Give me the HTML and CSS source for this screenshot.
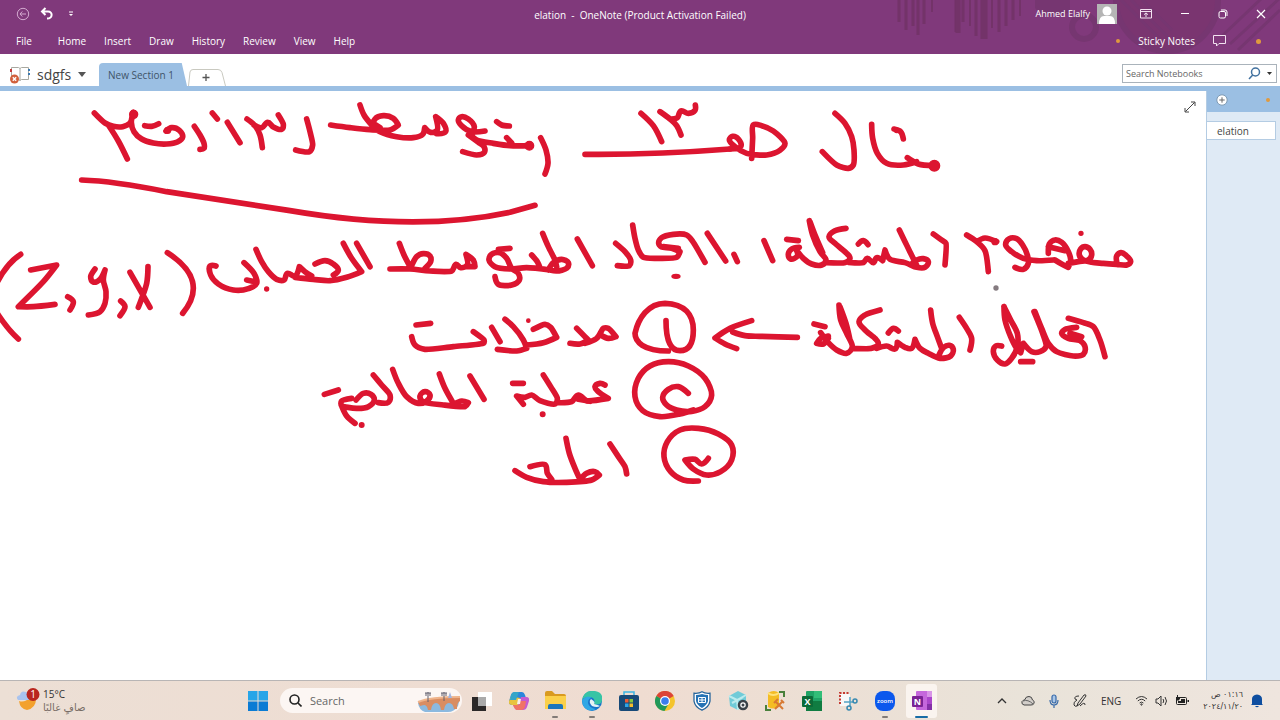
FILE: index.html
```html
<!DOCTYPE html>
<html lang="en">
<head>
<meta charset="utf-8">
<title>elation - OneNote</title>
<link rel="stylesheet" href="styles.css">
</head>
<body>
<div class="app">
  <header class="ribbon">
    <svg class="ribbon-art" width="400" height="54" viewBox="0 0 400 54" aria-hidden="true">
      <g stroke="#733369" stroke-width="3">
        <path d="M19 0v22M26 0v30M33 0v26M38 0v35M44 0v24M76 0v32M83 0v22M96 0v36M119 0v32M126 0v26M133 0v20"/>
        <path d="M52 0v12M90 0v26M112 0v28M140 0v16" stroke-width="2"/>
        <path d="M104 0v39" stroke-width="7"/><path d="M78 0v33" stroke-width="5"/>
      </g>
      <g fill="none" stroke="#763671">
        <circle cx="204" cy="27" r="12" stroke-width="6"/>
        <circle cx="287" cy="0" r="51" fill="#7a3570" stroke-width="6"/>
        <path d="M155 0h35v12q-26 10-35-4z" fill="#763671" stroke="none"/>
        <path d="M241 0l39 39M251 0l36 36M262 0l30 30M350 44l50-46M342 36l40-38M358 50l42-40" stroke-width="3"/>
      </g>
    </svg>
    <div class="title-row">
      <div class="quick">
        <button class="icon-btn" aria-label="Back"><svg width="14" height="14" viewBox="0 0 14 14" fill="none" stroke="#d3a9cf"><circle cx="7" cy="7" r="5.700"/><path d="M10 7H4M6.300 4.500L4 7l2.300 2.500"/></svg></button>
        <button class="icon-btn" aria-label="Undo"><svg width="14" height="14" viewBox="0 0 14 14" fill="none" stroke="#fff" stroke-width="2"><path d="M5.500 1L2 4.500 5.500 8M2 4.500h6c5 0 5 7-1 7"/></svg></button>
        <button class="icon-btn" aria-label="Customize toolbar"><svg width="6" height="6" viewBox="0 0 6 6"><path d="M1 1h4" stroke="#fff"/><path d="M1 3h4L3 5z" fill="#fff"/></svg></button>
      </div>
      <div class="title">elation&nbsp; -&nbsp; OneNote (Product Activation Failed)</div>
      <div class="window-tools">
        <span class="user">Ahmed Elalfy</span>
        <svg class="avatar" width="20" height="20" viewBox="0 0 20 20"><path fill="#b5b5b5" d="M0 0h20v20H0z"/><circle cx="10" cy="7" r="4.500" fill="#fff"/><path d="M2 20q0-8 5-8h6q5 0 5 8z" fill="#fff"/></svg>
        <button class="icon-btn" aria-label="Ribbon options"><svg width="12" height="10" viewBox="0 0 12 10" fill="none" stroke="#f2e2f0"><path d="M.5.500h11v8.500H.5zM.5 2.500h11M6 8V4M4 5.700L6 3.900l2 1.800"/></svg></button>
        <button class="icon-btn" aria-label="Minimize"><svg width="10" height="10" viewBox="0 0 10 10"><path d="M1 4.500h8" stroke="#fff"/></svg></button>
        <button class="icon-btn" aria-label="Restore"><svg width="10" height="10" viewBox="0 0 10 10" fill="none" stroke="#fff"><rect x="1" y="2.500" width="6.500" height="6.500" rx="1.500"/><path d="M3 1h4q2 0 2 2v4"/></svg></button>
        <button class="icon-btn" aria-label="Close"><svg width="10" height="10" viewBox="0 0 10 10"><path d="M1 1l8 8M9 1L1 9" stroke="#fff" stroke-width="1.200"/></svg></button>
      </div>
    </div>
    <nav class="menu">
      <button class="file">File</button><button>Home</button><button>Insert</button><button>Draw</button><button>History</button><button>Review</button><button>View</button><button>Help</button>
      <div class="menu-right">
        <i class="dot"></i><button>Sticky Notes</button>
        <button aria-label="Comments"><svg width="13" height="12" viewBox="0 0 13 12" fill="none" stroke="#f2e2f0"><path d="M.5.500h12v8H6L3.500 11V8.500h-3z"/></svg></button>
        <i class="dot big"></i>
      </div>
    </nav>
  </header>

  <div class="notebook-bar">
    <button class="notebook">
      <svg width="20" height="19" viewBox="0 0 20 19" fill="none"><path d="M1.500 2.500h7l1.500 1 1.500-1h7v12h-7l-1.500 1-1.500-1h-7zM10 3.500v12" stroke="#a8a8a0"/><path d="M1 4v3" stroke="#c43b3b" stroke-width="2"/><path d="M19 4v2M19 8v2" stroke="#3d7ab0" stroke-width="2"/><circle cx="4.500" cy="14" r="4.500" fill="#d1603c"/><path d="M2.800 12.300l3.400 3.400M6.200 12.300l-3.400 3.400" stroke="#fff" stroke-width="1.400"/></svg>
      <span>sdgfs</span>
      <svg width="8" height="5" viewBox="0 0 8 5"><path d="M0 0h8L4 5z" fill="#555"/></svg>
    </button>
    <button class="section-tab">New Section 1</button>
    <button class="add-tab" aria-label="Add section"><svg width="38" height="17" viewBox="0 0 38 17" fill="none"><path d="M.5 17L2 3Q2.500.500 5 .500h25q3 0 4 3L37.500 17" stroke="#c9c9c0"/><path d="M18 5v7M14.500 8.500h7" stroke="#555" stroke-width="1.300"/></svg></button>
    <form class="search">
      <input type="text" placeholder="Search Notebooks" aria-label="Search Notebooks">
      <svg width="13" height="13" viewBox="0 0 13 13" fill="none" stroke="#41719f" stroke-width="1.500"><circle cx="7.500" cy="5" r="4"/><path d="M4.700 8L1 12"/></svg>
      <svg width="5" height="3" viewBox="0 0 5 3"><path d="M0 0h5L2.500 3z" fill="#333"/></svg>
    </form>
  </div>

  <main class="workspace">
    <section class="page">
      <svg class="ink" width="1206" height="589" viewBox="0 0 1206 589" role="img" aria-label="Handwritten notes">
        <g transform="translate(0 4) scale(.33333)">
          <path d="M283 54L315 84 340 94 368 95 390 84 400 52M325 90L355 138 382 192M400 52L394 82 402 110 425 132 460 144 500 147 532 141 548 126 538 106 515 98 498 108M434 92L455 94 476 86M583 94L600 120 612 145 612 160 600 163M637 54L652 72M682 82L720 143M741 72L765 92 780 120 787 158M762 90L785 98 803 82 820 96 845 103 850 88 835 60"/>
          <path d="M245 255Q340 258 500 290L870 347Q1250 412 1530 352L1605 331"/>
          <circle cx="401" cy="58" r="12"/><circle cx="503" cy="106" r="9"/>
        </g>
        <g transform="translate(290 4) scale(.33333)">
          <path d="M50 72L60 110 68 150 58 170 17 165M122 90L180 98 240 104 300 105 325 90 310 70 280 62 255 72 250 95 270 110 320 125 370 128 398 118 404 98 422 112 442 105 437 65 460 85 467 110 440 116M210 30L222 60 245 90M250 85L270 98"/>
          <path d="M585 108L545 110 515 92 505 75 515 65 535 72 553 95 545 120 560 135 610 145 660 152 718 152M650 128L665 144M535 120L565 142 582 155 583 172 560 180 518 170M620 80L635 90 658 93M752 128L768 165 774 205 765 237"/>
          <circle cx="718" cy="152" r="13"/>
        </g>
        <g transform="translate(570 4) scale(.33333)">
          <path d="M45 178Q250 180 480 162"/>
          <path d="M480 162L512 155 505 132 488 124 478 135 495 155 530 175 590 180 630 166 645 145 610 108 575 92 550 90 548 130 545 190M213 55L250 92 275 140M270 50L300 72 320 92 333 120M303 72L322 68 333 48 355 55 375 46 376 30M795 55L825 85 845 125 852 165 850 210 835 220 800 210 757 170M905 88L908 130 922 175 950 205 1000 210 1040 200M1012 188L1045 207 1090 212M972 102L992 110 1000 132"/>
          <circle cx="1093" cy="212" r="16"/><circle cx="980" cy="106" r="7"/>
        </g>
        <g transform="translate(0 129) scale(.33333)">
          <path d="M62 103Q20 130-10 190M-5 285Q25 330 55 357M502 98Q630 180 548 280"/>
          <path d="M92 150L170 135 130 185 55 260 100 260 165 253M203 230L220 245 210 270M285 147L272 170 280 186 300 178 315 150M315 150L310 180 318 215 315 250 300 275 265 285M362 243L375 260 360 287M390 157L450 262M444 140L440 190 415 262"/>
          <path d="M648 138L630 138 632 165 655 192 700 210 745 206 770 190 762 160 732 128M765 185L740 180M768 88L785 125 805 155 830 178 852 180 862 160 885 168 898 140 915 155 935 168M885 172L940 178 990 182 1040 172 1085 155 1055 115 1030 70M945 132L975 122 1000 132 1015 150 1000 165M1070 70L1110 140"/>
          <circle cx="800" cy="207" r="6"/>
        </g>
        <g transform="translate(380 114) scale(.33333)">
          <path d="M30 192L90 192 150 198 215 198 228 178 242 188 262 180 258 148 280 165 285 185 262 185M58 115L72 150 92 188 110 155 130 146 150 153 152 170 135 190M355 133L390 130M510 195L440 188 390 192 345 185 327 165 335 148 360 143 380 160 395 190 415 205 418 225 395 240 355 238 345 215M455 150L472 170 480 188M488 85L505 125 525 165 530 185M505 195L520 173 545 163 565 173 560 190 530 198 510 195M592 102L637 182M707 115L735 140 752 165 748 182 712 182"/>
          <path d="M758 60L765 100 775 135 790 157 840 160 890 157 900 140 875 130 845 126 836 115 845 98 880 88 920 90 940 112 975 172M850 125L895 130M982 85L1037 168M1062 148L1072 170"/>
          <ellipse cx="888" cy="214" rx="12" ry="6"/>
        </g>
        <g transform="translate(740 119) scale(.33333)">
          <path d="M72 92L98 152M140 88L175 92M178 112L155 117 145 132 152 147 172 138 168 118 190 145 215 162 245 165 258 150 240 125 218 75 208 32M210 35L227 80 248 128M318 55L285 62 267 80 285 100 320 130 330 145 315 158 260 158M325 157L370 158 382 145 400 158 410 143 428 152 435 120 450 148 495 158 530 172 555 172 565 155 550 146 530 150 512 165M478 60L495 95 512 130 530 166M355 102L370 92 384 104M580 72L605 90 618 100 615 165"/>
          <path d="M680 75L710 95 735 122 745 185M710 95L735 84 770 95M940 150L890 152 850 145 815 125 797 105 808 86 830 86 848 105 862 135 865 160 850 178 825 172M925 110L975 122M925 130L928 102 945 90 965 97 985 125 992 150 985 172 965 162 945 150M985 160L1015 155 1045 150 1055 135 1050 118 1035 110 1022 117 1018 135 1030 150 1055 157 1090 160 1130 163 1160 165 1172 155 1158 136 1143 128 1130 138 1130 155"/>
          <circle cx="765" cy="95" r="9"/><circle cx="1023" cy="70" r="6"/>
          <circle class="pointer" cx="768" cy="234" r="8"/>
          <path d="M222 342L255 350M265 378L242 385 230 400 250 402 265 385M242 368L265 398 290 420 320 430 337 410 320 370 302 330 297 285M300 290L318 340 330 390M420 300L375 315 357 335 375 360 405 385 415 402 395 415 340 415M410 415L440 408 465 417 472 397 495 412 515 415 525 388 540 415 565 430 600 445 632 438 640 418 628 406 610 413 597 435M572 300L578 340 592 380 606 418M445 369L460 355 475 363M658 322L680 355 695 385 690 420"/>
          <path d="M792 290L812 330 832 370 832 410 815 445 795 462 772 450 760 425 767 408 785 408M792 290L795 330 812 380 828 412 842 428 850 400 875 425 900 425 918 410 908 370 882 305M885 305L905 355 925 400 950 425 1000 438 1030 433 1035 410 1020 392 985 385 965 370 975 358 1010 352M985 325L1030 338 1060 350 1080 390 1095 440M990 370L1025 380M842 455L878 455"/>
          <path d="M35 332L-30 355 -75 384 -45 402 -10 416M-22 366L15 377 60 379 172 382"/>
        </g>
        <g transform="translate(310 199) scale(.33333)">
          <path d="M318 105L362 100M305 140L315 165 345 178 430 170 520 160 522 150 490 125M545 112L570 155M585 88L610 110 640 150 650 175 620 183 562 178M650 165L700 158 740 142 722 112 705 103 670 118M800 115L825 140 835 150 810 162 780 160M825 160L860 145 880 115 895 115 918 140 895 145 872 135"/>
          <path d="M1075 183C1000 183 975 155 975 130 985 85 1015 40 1065 40 1125 42 1150 75 1150 120 1150 165 1135 182 1110 182 1080 182 1068 150 1068 92"/>
          <path d="M1135 310L1105 290 1075 298 1058 322 1070 345 1100 360 1145 364 1185 350 1205 315 1185 265 1135 228 1075 215 1020 228 985 265 975 320 998 362 1050 380 1110 372 1150 360M1165 573L1120 570 1082 545 1062 500 1072 455 1110 420 1165 415 1225 432 1265 465 1265 510 1232 545 1190 555 1150 537 1125 510 1155 508 1175 522 1195 505"/>
          <path d="M43 313L85 300M138 330L160 310 183 313 193 330 175 350 140 355 95 347 95 333 125 325M95 348L110 378 135 400M190 255L215 285 240 315 235 337 205 338M248 238L265 280 290 320 325 340 350 333 360 315 345 305 330 318 340 336 400 345 465 350 475 338 455 333 425 345M388 252L405 295 430 340M480 258L522 328M608 280L640 280M640 343L620 318 645 322 665 315 690 332 735 342 742 325 722 290 700 255M740 338L785 335 805 315 830 332 895 325 865 305 855 290 870 280 885 285"/>
          <path d="M615 542L650 562 700 575 770 577 845 570 868 555 855 545 830 550 808 572M768 445L778 490 795 535 810 568M660 530L705 524 712 550 725 568M900 462L925 500 945 530 950 552"/>
          <path d="M805 328L840 334"/>
          <circle cx="655" cy="92" r="5"/><circle cx="155" cy="405" r="7"/><circle cx="698" cy="373" r="7"/>
        </g>
      </svg>
      <button class="expand" aria-label="Full page view"><svg width="12" height="12" viewBox="0 0 12 12" fill="none" stroke="#444"><path d="M1.500 10.500l9-9M7 1h4v4M1 7v4h4"/></svg></button>
    </section>
    <aside class="pages">
      <div class="pages-head">
        <button class="icon-btn" aria-label="Add page"><svg width="12" height="12" viewBox="0 0 12 12"><circle cx="6" cy="6" r="5.200" fill="#fff" stroke="#7e9ab3"/><path d="M6 3.300v5.400M3.300 6h5.400" stroke="#666"/></svg></button>
        <i class="dot"></i>
      </div>
      <button class="page-item">elation</button>
    </aside>
  </main>

  <footer class="taskbar">
    <button class="weather">
      <svg width="24" height="26" viewBox="0 0 24 26"><path d="M3 13q6 2 11-4l6 2q0 9-9 11-7-1-8-9z" fill="#f3a12d"/><path d="M2 12q-3-4 2-5 1-5 6-3 4 1 3 8z" fill="#a9c3ee"/><circle cx="17" cy="6.500" r="6.500" fill="#b9261e"/><text x="17" y="10" text-anchor="middle" class="badge">1</text></svg>
      <span class="weather-text"><span>15°C</span><span class="sky" lang="ar" dir="rtl">صافٍ غالبًا</span></span>
    </button>
    <div class="dock">
      <button class="start" aria-label="Start"><svg width="20" height="20" viewBox="0 0 20 20"><path d="M0 0h9.500v9.500H0zM10.500 0H20v9.500h-9.500z" fill="#27a5e8"/><path d="M0 10.500h9.500V20H0zM10.500 10.500H20V20h-9.500z" fill="#0a7bd4"/></svg></button>
      <div class="task-search">
        <svg width="13" height="13" viewBox="0 0 13 13" fill="none" stroke="#222" stroke-width="1.600"><circle cx="5.500" cy="5.500" r="4.500"/><path d="M9 9l3.500 3.500"/></svg>
        <input type="text" placeholder="Search" aria-label="Search">
        <svg width="44" height="22" viewBox="0 0 44 22"><path d="M1 13q12-6 42-5l-2 8q-4 6-10 6H8Q2 20 1 13z" fill="#8bb9df"/><path d="M1 12q12-5 42-5v4q-3 1-3 8h-3q-1-6-5-6t-5 7h-3q-1-7-5-7t-5 7h-3q-1-5-4-5l-4 1z" fill="#d98d62"/><path d="M1 12q12-5 42-5" stroke="#efb48b" stroke-width="2" fill="none"/><path d="M11 12V2M27 11V2M8 3h6M24 3h6M9 3v3M13 3v3M25 3v3M29 3v3" stroke="#62616f"/><path d="M31 8l2-6 2 6z" fill="#a4b6df"/></svg>
      </div>
      <div class="apps">
        <button aria-label="Task view"><svg width="20" height="20" viewBox="0 0 20 20"><path d="M6 1h14v14H6z" fill="#fff"/><path d="M0 6h14v14H0z" fill="#2b2828"/><path d="M6 6h8v9H6z" fill="#aaa"/></svg></button>
        <button aria-label="Copilot"><svg width="20" height="20" viewBox="0 0 20 20"><path d="M6 1h7q2 0 3 3l1 3h-5l-3 7H3q-4 0-3-4l2-6q1-3 4-3z" fill="#2b86dc"/><path d="M0 10l2-4q5 0 9 1l-2 7H3q-4 0-3-4z" fill="#e8c33f"/><path d="M6 1h4L7 9H1l1-5q1-3 4-3z" fill="#33a5c8"/><path d="M12 6h5q4 0 3 4l-2 6q-1 3-4 3H8q-2 0-3-3l-1-2h5z" fill="#c55bd0"/><path d="M4 14h6l1-4h6l-1 6q-1 3-4 3H8q-2 0-4-5z" fill="#f07366"/><path d="M9 8h3l-1 5H8z" fill="#f7eee9"/></svg></button>
        <button class="running" aria-label="File Explorer"><svg width="21" height="20" viewBox="0 0 21 20"><path d="M0 2q0-2 2-2h5l3 3h9q2 0 2 2v5H0z" fill="#d99a20"/><path d="M0 5h21v13H0z" fill="#fbd04a"/><path d="M3 18v-3q0-2 2-2h11q2 0 2 2v3z" fill="#1c75bc"/></svg></button>
        <button class="running" aria-label="Edge"><svg width="20" height="20" viewBox="0 0 20 20"><circle cx="10" cy="10" r="10" fill="#1874ca"/><path d="M0 9Q2-1 12 0t8 10q-2 5-8 3 2-6-4-7-6 0-8 3z" fill="#37c4a5"/><path d="M0 9q5-6 10-2-4 0-4 5 1 5 8 6-7 4-12-2Q0 13 0 9z" fill="#2fa7e5"/><path d="M9 8q-3 3 1 7 5 2 8 0-2-1-6-2 2-2-3-5z" fill="#e6f3f4"/></svg></button>
        <button aria-label="Microsoft Store"><svg width="20" height="20" viewBox="0 0 20 20"><path d="M5 6V1h10v5" fill="none" stroke="#3bb4e4" stroke-width="1.500"/><rect y="4" width="20" height="16" rx="2" fill="#174978"/><path d="M6 8h3.500v3.500H6z" fill="#ef5a33"/><path d="M10.500 8H14v3.500h-3.500z" fill="#86c63e"/><path d="M6 12.500h3.500V16H6z" fill="#2da5e8"/><path d="M10.500 12.500H14V16h-3.500z" fill="#f6bd2d"/></svg></button>
        <button aria-label="Chrome"><svg width="20" height="20" viewBox="0 0 20 20"><circle cx="10" cy="10" r="10" fill="#f5c42c"/><path d="M10 10L1.300 5A10 10 0 0 1 18.700 5z" fill="#dc4437"/><path d="M10 10L1.300 5A10 10 0 0 0 9.500 20L14 12z" fill="#21985a"/><circle cx="10" cy="10" r="5" fill="#fff"/><circle cx="10" cy="10" r="3.800" fill="#3b7ded"/></svg></button>
        <button aria-label="Security"><svg width="18" height="20" viewBox="0 0 18 20"><path d="M9 .700q3 2 8 1.500v8q-1 6-8 9-7-3-8-9v-8Q6 2.700 9 .700z" fill="#fff" stroke="#27659b" stroke-width="1.300"/><path d="M9 3q3 1 6 1v6q-1 4-6 7-5-3-6-7V4q3 0 6-1z" fill="#2673b5"/><path d="M5.500 6.500h7v5h-7zM5.500 9h7M9 6.500v5" fill="none" stroke="#fff"/></svg></button>
        <button aria-label="Database tool"><svg width="21" height="20" viewBox="0 0 21 20"><path d="M1 5l9-5 8 4v9l-8 6-8-4z" fill="#70cbd8"/><path d="M1 5l8 4 9-5M9 9l1 10M4 12l11-6" fill="none" stroke="#bcebed" stroke-width="2"/><circle cx="15" cy="14" r="4" fill="#fff" stroke="#3a4249" stroke-width="2.500"/><circle cx="15" cy="14" r="1.500" fill="#3a4249"/></svg></button>
        <button aria-label="Configuration"><svg width="20" height="20" viewBox="0 0 20 20"><path d="M3 2q6-4 11 0v14q-6 3-11 0z" fill="#f4bc24"/><path d="M3 2q5 4 11 0" fill="none" stroke="#ffe27a" stroke-width="2"/><path d="M14 1h5v5M1 14v5h5" fill="none" stroke="#49803b" stroke-width="2"/><path d="M10 10l8 8M18 10l-8 8M9 12l4-4M16 9l3 3" stroke="#d87932" stroke-width="2"/></svg></button>
        <button aria-label="Excel"><svg width="20" height="20" viewBox="0 0 20 20"><rect x="4" width="16" height="20" rx="1" fill="#20a366"/><path d="M12 0h8v7h-8z" fill="#32bd78"/><path d="M4 10h16v10H4z" fill="#107c41"/><rect y="5" width="11" height="11" rx="1" fill="#0c6a38"/><text x="5.500" y="14" text-anchor="middle" class="logo-letter">X</text></svg></button>
        <button aria-label="Snipping Tool"><svg width="20" height="20" viewBox="0 0 20 20" fill="none"><path d="M2 3h10v12H2z" fill="#f8f8f8"/><path d="M2 13V2h9" stroke="#c63a32" stroke-width="2" stroke-dasharray="2 1.500"/><path d="M6 11h10M12 6v10" stroke="#54a2c4" stroke-width="1.500"/><circle cx="17" cy="10" r="2" stroke="#3789b1" stroke-width="1.500"/><circle cx="11" cy="17" r="2" stroke="#3789b1" stroke-width="1.500"/></svg></button>
        <button class="running" aria-label="Zoom"><svg width="20" height="20" viewBox="0 0 20 20"><rect width="20" height="20" rx="8" fill="#0b58ed"/><text x="10" y="12" text-anchor="middle" class="zoom-word">zoom</text></svg></button>
        <button class="running active" aria-label="OneNote"><svg width="20" height="20" viewBox="0 0 20 20"><rect x="4" width="16" height="19" rx="1" fill="#c567dc"/><path d="M15 0h5v6h-5z" fill="#d894e7"/><path d="M15 6h5v7h-5z" fill="#ab46cb"/><path d="M15 13h5v6h-5z" fill="#8430a7"/><rect y="5" width="11" height="11" rx="1" fill="#7b2294"/><text x="5.500" y="14" text-anchor="middle" class="logo-letter">N</text></svg></button>
      </div>
    </div>
    <div class="tray">
      <button aria-label="Hidden icons"><svg width="10" height="6" viewBox="0 0 10 6" fill="none" stroke="#333" stroke-width="1.300"><path d="M1 5l4-4 4 4"/></svg></button>
      <button aria-label="OneDrive"><svg width="14" height="11" viewBox="0 0 14 11"><path d="M3 10Q0 9 1 6.500 2 5 3.500 5 5 1 8 1.500q3 0 3.500 3.500Q14 6 13 8.500q-1 1.500-3 1.500z" fill="#d2cec9" stroke="#444"/><path d="M2 6q5-2 10 3" fill="none" stroke="#666"/></svg></button>
      <button aria-label="Microphone"><svg width="10" height="14" viewBox="0 0 10 14" fill="none" stroke="#3568a8" stroke-width="1.200"><rect x="3" y="1" width="4" height="8" rx="2" fill="#a9c6e7"/><path d="M1 6q0 5 4 5t4-5M5 11v3"/></svg></button>
      <button aria-label="Pen"><svg width="14" height="14" viewBox="0 0 14 14" fill="none" stroke="#333"><path d="M4 12l1-3 6-8q2-1 2 1L7 10zM6 2Q1 2 2 5l2 1Q0 8 1 11q1 2 3 1M7 12q5-5 5-1"/></svg></button>
      <button class="lang">ENG</button>
      <button class="status" aria-label="Network, volume and battery">
        <svg width="13" height="11" viewBox="0 0 13 11" fill="none" stroke="#333"><path d="M1 4q5.500-5 11 0M2.800 6q3.700-3.500 7.400 0M4.600 8q1.900-1.800 3.800 0"/><circle cx="6.500" cy="9.500" r=".7"/></svg>
        <svg width="13" height="12" viewBox="0 0 13 12" fill="none" stroke="#333"><path d="M1 4h2l3-3v10L3 8H1zM8 4q1.500 2 0 4M10 2q3 4 0 8"/></svg>
        <svg width="14" height="11" viewBox="0 0 14 11"><rect x="1.500" y="2.500" width="10" height="7" rx="1" fill="none" stroke="#222"/><path d="M6 4h4v4H3V6h3zM12.500 5H14v2h-1.500zM2 0h1v2h2v2L3 6 1 4V2h1z" fill="#222"/></svg>
      </button>
      <button class="clock" lang="ar" dir="rtl"><span>٠١:١٦ ص</span><span>٢٠٢٤/١١/٢٠</span></button>
      <button aria-label="Notifications"><svg width="12" height="14" viewBox="0 0 12 14"><path d="M1 10V5q0-4 5-4.500Q11 1 11 5v5l1 1H0zM4 12h4q-2 2.500-4 0z" fill="#0f4ea0"/></svg></button>
    </div>
  </footer>
</div>
<script src="ink.js"></script>
</body>
</html>
```
FILE: styles.css
```css
* { box-sizing: border-box; }
body { margin: 0; font: 10px/16px "Open Sans", "Noto Sans", sans-serif; color: #444; background: #fff; }
button { border: 0; padding: 0; background: none; color: inherit; font: inherit; }
button, input { font-family: inherit; }
svg { display: block; flex: none; }
.app { display: flex; flex-direction: column; min-height: 100vh; overflow: hidden; }
.icon-btn { display: flex; align-items: center; justify-content: center; }

.ribbon { position: relative; background: #80397b; color: #fff; }
.ribbon-art { position: absolute; top: 0; right: 0; }
.title-row, .menu { position: relative; display: flex; align-items: center; }
.title-row { display: grid; grid-template-columns: 1fr auto 1fr; height: 28px; }
.quick { display: flex; align-items: center; gap: 14px; padding-left: 16px; }
.quick .icon-btn:first-child { margin-right: -4px; }
.title { padding-top: 2px; }
.window-tools { display: flex; align-items: center; justify-content: flex-end; gap: 28px; padding-right: 14px; }
.user { margin-right: -21px; font-size: 9px; }
.avatar { margin-right: -5px; }
.menu { height: 26px; gap: 18px; padding: 0 16px; }
.file { margin-right: 8px; }
.menu-right { display: flex; align-items: center; gap: 18px; margin-left: auto; }
.dot { width: 4px; height: 4px; border-radius: 50%; background: #e09a3e; }
.menu-right .big { width: 5px; height: 5px; margin: 0 3px 0 12px; }

.notebook-bar { display: flex; align-items: flex-end; height: 37px; padding: 0 3px 0 10px; border-bottom: 5px solid #9bbfe3; background: #fff; }
.notebook { display: flex; align-items: center; gap: 7px; width: 89px; height: 23px; font-size: 14px; }
.section-tab { height: 23px; width: 88px; padding-right: 4px; background: #9bbfe3; border-radius: 4px 4px 0 0; clip-path: polygon(0 0, 94% 0, 100% 100%, 0 100%); color: #405468; }
.add-tab { margin-left: 1px; }
.search { display: flex; align-items: center; gap: 6px; width: 155px; height: 19px; margin: 0 0 3px auto; padding: 0 4px 0 3px; border: 1px solid #aab3bb; }
.search input { flex: 1; min-width: 0; border: 0; padding: 0; background: none; font-size: 9px; }
input::placeholder { color: #666; opacity: 1; }

.workspace { display: flex; flex: 1; }
.page { position: relative; flex: 1; min-width: 0; overflow: hidden; background: #fff; }
.ink { fill: none; stroke: #dc1530; stroke-width: 17; stroke-linecap: round; stroke-linejoin: round; }
.ink circle, .ink ellipse { fill: #dc1530; stroke-width: 4; }
.ink .pointer { fill: #857b80; stroke: none; }
.expand { position: absolute; top: 10px; right: 10px; }
.pages { width: 74px; background: #dfeaf5; border-left: 1px solid #b4cce3; }
.pages-head { display: flex; align-items: center; justify-content: space-between; height: 21px; padding: 0 10px 4px 9px; background: #9bbfe3; }
.page-item { display: block; width: 69px; height: 19px; margin-top: 9px; padding-left: 10px; border: 1px solid #b4cce3; border-left: 0; background: #fff; text-align: left; }

.taskbar { display: flex; align-items: center; height: 40px; padding: 0 17px 0 16px; border-top: 1px solid #b8b5b5; background: linear-gradient(90deg, #ecdfd5, #efdcd1 50%, #e9e3d9 80%, #efe5de); color: #333; }
.weather { display: flex; align-items: center; flex: 1; gap: 3px; text-align: left; }
.weather-text { display: flex; flex-direction: column; line-height: 13px; }
.sky { color: #776c65; font-family: "DejaVu Sans", sans-serif; }
.badge { fill: #fff; font-size: 10px; }
.dock { display: flex; align-items: center; gap: 12px; }
.task-search { display: flex; align-items: center; gap: 8px; width: 182px; height: 25px; padding: 0 1px 0 9px; border-radius: 13px; background: #fcf6f3; }
.task-search input { flex: 1; min-width: 0; padding: 0; border: 0; background: none; font-size: 11px; }
.apps { display: grid; grid-template-columns: repeat(13, 1fr); width: 476px; margin-left: -10px; }
.apps button { position: relative; display: grid; place-items: center; height: 34px; }
.running::after { content: ""; position: absolute; bottom: 0; width: 6px; height: 2px; border-radius: 1px; background: #827b77; }
.apps .active { margin: 0 3px; background: #faf4ef; border-radius: 3px; }
.active::after { width: 13px; background: #176ca5; }
.logo-letter { fill: #fff; font-size: 9px; font-weight: 700; }
.zoom-word { fill: #fff; font-size: 6px; font-weight: 600; }
.tray { display: flex; align-items: center; gap: 14px; margin-left: 57px; }
.lang { font-size: 10px; }
.status { display: flex; gap: 7px; }
.clock { display: flex; flex-direction: column; font-family: "DejaVu Sans", sans-serif; font-size: 8px; line-height: 12px; text-align: right; }
.tray button:last-child { margin-left: -6px; }
```
FILE: ink.js
```js
// Turns the sampled pen points of each ink stroke into a smooth curve.
function tangent(points, i) {
  const a = points[i - 1], b = points[i], c = points[i + 1];
  if (!a || !c) return [0, 0];
  const ux = b[0] - a[0], uy = b[1] - a[1], vx = c[0] - b[0], vy = c[1] - b[1];
  const u = Math.hypot(ux, uy), v = Math.hypot(vx, vy);
  // Keep sharp turns of the pen as corners.
  if ((ux * vx + uy * vy) / (u * v) < -0.1) return [0, 0];
  const size = Math.min(u, v) / 3, length = Math.hypot(ux / u + vx / v, uy / u + vy / v);
  return [(ux / u + vx / v) / length * size, (uy / u + vy / v) / length * size];
}

function smooth(stroke) {
  if (/[QC]/.test(stroke)) return stroke;
  const n = stroke.match(/-?\d+/g).map(Number);
  const points = [];
  for (let i = 0; i < n.length; i += 2) points.push([n[i], n[i + 1]]);
  let d = "M" + points[0];
  for (let i = 1; i < points.length; i++) {
    const p = points[i - 1], q = points[i], s = tangent(points, i - 1), t = tangent(points, i);
    d += "C" + [p[0] + s[0], p[1] + s[1], q[0] - t[0], q[1] - t[1], q[0], q[1]];
  }
  return d;
}

document.querySelectorAll(".ink path").forEach(function (path) {
  const strokes = path.getAttribute("d").split(/(?=M)/);
  path.setAttribute("d", strokes.map(smooth).join(""));
});
```
